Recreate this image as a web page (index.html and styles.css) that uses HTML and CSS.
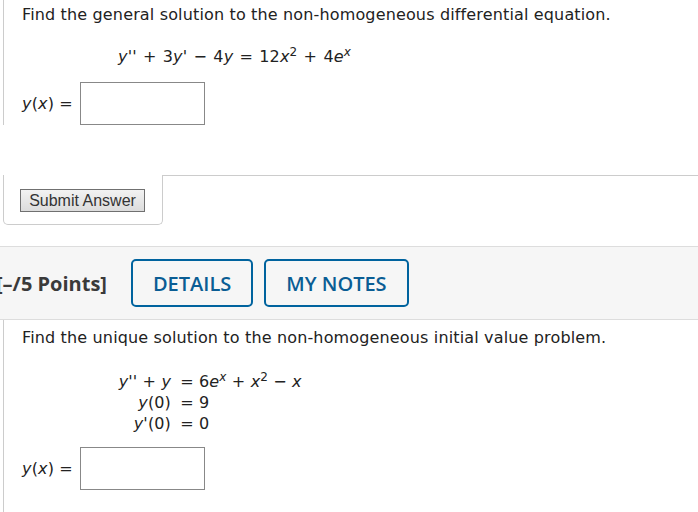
FILE: index.html
```html
<!DOCTYPE html>
<html>
<head>
<meta charset="utf-8">
<link rel="stylesheet" href="styles.css">
</head>
<body>
<div class="q">
  <div class="q-body">
    <p class="prompt">Find the general solution to the non-homogeneous differential equation.</p>
    <div class="eq1"><i>y</i>'' + 3<i>y</i>' − 4<i>y</i> = 12<i>x</i><sup>2</sup> + 4<i>e</i><sup><i>x</i></sup></div>
    <div class="answer-row"><span class="lbl"><i>y</i>(<i>x</i>) =</span><span class="box"></span></div>
  </div>
  <div class="submit-row">
    <div class="submit-cell"><button class="submit">Submit Answer</button></div>
    <div class="filler"></div>
  </div>
</div>

<div class="band">
  <span class="points">[–/5 Points]</span>
  <div class="btns">
    <span class="pill">DETAILS</span>
    <span class="pill">MY NOTES</span>
  </div>
</div>

<div class="q q2">
  <div class="q-body">
    <p class="prompt">Find the unique solution to the non-homogeneous initial value problem.</p>
    <div class="sys">
      <span class="l"><i>y</i>'' + <i>y</i></span><span class="m">=</span><span class="r">6<i>e</i><sup><i>x</i></sup> + <i>x</i><sup>2</sup> − <i>x</i></span>
      <span class="l"><i>y</i>(0)</span><span class="m">=</span><span class="r">9</span>
      <span class="l"><i>y</i>'(0)</span><span class="m">=</span><span class="r">0</span>
    </div>
    <div class="answer-row a2"><span class="lbl"><i>y</i>(<i>x</i>) =</span><span class="box"></span></div>
  </div>
</div>
</body>
</html>
```

FILE: styles.css
```css
html, body {
  margin: 0;
  padding: 0;
  background: #fff;
  overflow: hidden;
}
body {
  width: 698px;
  height: 512px;
  font-family: "DejaVu Sans", Verdana, sans-serif;
  font-size: 16px;
  letter-spacing: 0.15px;
  color: #222;
}
i { font-style: oblique; }
sup {
  font-size: 12px;
  vertical-align: 6px;
  line-height: 0;
}
.q {
  margin-left: 3px;
}
.q-body {
  border-left: 1px solid #ccc;
  padding: 5px 0 0 18px;
}
.prompt {
  margin: 0;
  line-height: 20px;
  white-space: nowrap;
}
.eq1 {
  margin: 22px 0 0 96px;
  line-height: 20px;
  white-space: nowrap;
  word-spacing: 1px;
}
.answer-row {
  display: flex;
  align-items: center;
  gap: 5px;
  margin-top: 15px;
  height: 43px;
}
.lbl {
  width: 53px;
  white-space: nowrap;
}
.box {
  width: 123px;
  height: 41px;
  border: 1px solid #888;
  background: #fff;
}
.submit-row {
  display: flex;
  margin-top: 50px;
}
.submit-cell {
  width: 160px;
  height: 50px;
  border-left: 1px solid #ccc;
  border-right: 1px solid #ccc;
  border-bottom: 1px solid #ccc;
  border-radius: 0 0 5px 5px;
  box-sizing: border-box;
  padding: 14px 0 0 16px;
}
.filler {
  flex: 1;
  border-top: 1px solid #ccc;
}
.submit {
  font-family: "Liberation Sans", Arial, sans-serif;
  font-size: 16px;
  letter-spacing: 0;
  color: #333;
  width: 125px;
  height: 23px;
  padding: 0;
  border: 1px solid #707070;
  border-radius: 0;
  background: linear-gradient(#f2f2f2, #dcdcdc);
  line-height: 21px;
}
.band {
  margin-top: 21px;
  height: 74px;
  background: #f6f6f6;
  border-top: 1px solid #ddd;
  border-bottom: 1px solid #ddd;
  box-sizing: border-box;
  display: flex;
  align-items: center;
  font-family: "Open Sans", sans-serif;
  letter-spacing: 0;
}
.points {
  font-size: 20px;
  font-weight: 700;
  color: #3a3a3a;
  margin-left: -4px;
  white-space: nowrap;
}
.btns {
  display: flex;
  gap: 11px;
  margin-left: 24px;
}
.pill {
  height: 48px;
  box-sizing: border-box;
  border: 2px solid #00639e;
  border-radius: 5px;
  display: flex;
  align-items: center;
  justify-content: center;
  padding: 0 20px;
  font-size: 20px;
  font-weight: 600;
  color: #0a5d94;
}
.q2 .q-body {
  padding-top: 8px;
  height: 184px;
}
.sys {
  display: grid;
  grid-template-columns: 156px 18px auto;
  line-height: 21px;
  margin-top: 23px;
  white-space: nowrap;
}
.sys .l { text-align: right; padding-right: 7px; }
.sys .m { text-align: center; }
.sys .r { padding-left: 3px; }
.a2 {
  margin-top: 13px;
}
```
